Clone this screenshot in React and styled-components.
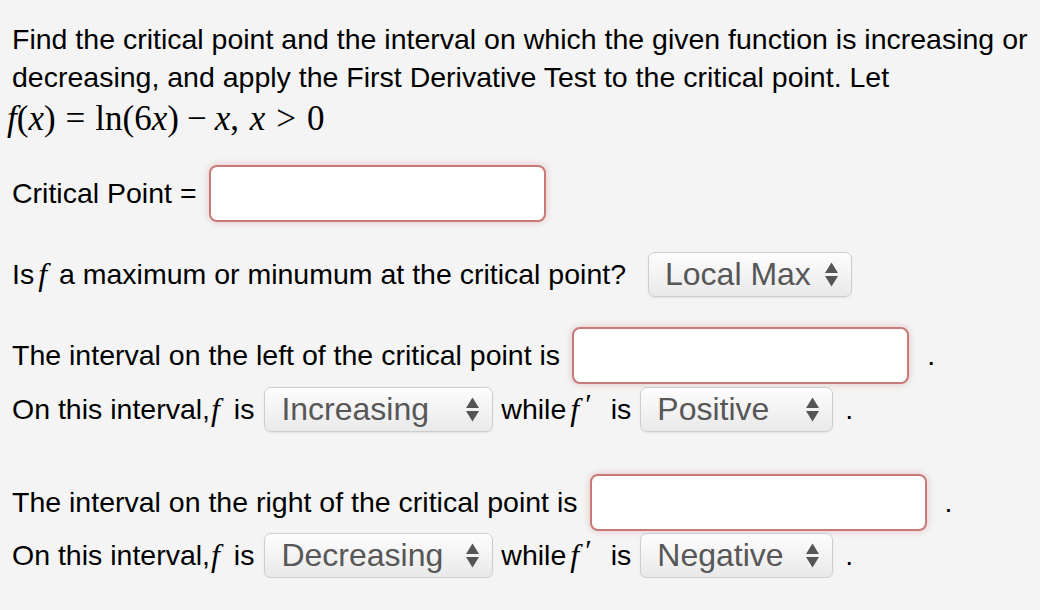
import React from "react";
import styled, { createGlobalStyle } from "styled-components";

const GlobalStyle = createGlobalStyle`
  body {
    margin: 0;
    background: #f4f4f4;
    font-family: "Liberation Sans", Helvetica, Arial, sans-serif;
    color: #000;
  }
`;

const Page = styled.div`
  padding: 20px 12px 0 12px;
  font-size: 28.5px;
`;

const Prompt = styled.p`
  margin: 0;
  line-height: 38px;
`;

const Formula = styled.div`
  display: flex;
  align-items: baseline;
  font-family: "Liberation Serif", "Times New Roman", serif;
  font-size: 35px;
  line-height: 45px;
  margin-left: -5px;
  white-space: pre;
`;

const Op = styled.span`
  margin: 0 ${(p) => p.$gap}px;
`;

const Var = styled.i`
  font-family: "Liberation Serif", "Times New Roman", serif;
  font-style: italic;
  font-size: 32px;
  margin: ${(p) => p.$m || "0 4px"};
`;

const Prime = styled.span`
  font-family: "Liberation Serif", "Times New Roman", serif;
  font-size: 30px;
  position: relative;
  top: -6px;
  margin: 0 19px 0 6px;
`;

const Row = styled.div`
  display: flex;
  align-items: center;
  white-space: pre;
  margin-top: ${(p) => p.$top}px;
  height: ${(p) => p.$h}px;
`;

const Answer = styled.div`
  box-sizing: border-box;
  width: ${(p) => p.$w}px;
  height: 57px;
  margin-left: ${(p) => p.$ml}px;
  background: #fff;
  border: 2px solid #c77b78;
  border-radius: 8px;
  box-shadow: 0 0 7px rgba(200, 110, 110, 0.4);
`;

const Dot = styled.span`
  margin-left: ${(p) => p.$ml}px;
`;

const Select = styled.div`
  box-sizing: border-box;
  width: ${(p) => p.$w}px;
  height: 45px;
  margin-left: ${(p) => p.$ml}px;
  display: flex;
  align-items: center;
  justify-content: space-between;
  padding: 0 12px 0 16px;
  border: 1.5px solid #cdcdcd;
  border-radius: 7px;
  background: linear-gradient(#fdfdfd, #f2f2f2 55%, #e9e9e9);
  box-shadow: inset 0 1px 1px #fff, 0 1px 2px rgba(0, 0, 0, 0.08);
  color: #575757;
  font-size: 32px;
`;

const Arrows = () => (
  <svg width="15" height="25" viewBox="0 0 15 25">
    <path d="M7.5 0.5 L14 11 L1 11 Z" fill="#555" />
    <path d="M7.5 24.5 L14 14 L1 14 Z" fill="#555" />
  </svg>
);

const Dropdown = ({ w, ml, children }) => (
  <Select $w={w} $ml={ml}>
    <span>{children}</span>
    <Arrows />
  </Select>
);

const DerivRow = ({ top, first, second }) => (
  <Row $top={top} $h={45}>
    On this interval,<Var $m="0 6px 0 1px">f</Var> is
    <Dropdown w={229} ml={10}>{first}</Dropdown>
    {" while"}<Var $m="0 0 0 4px">f</Var>
    <Prime>′</Prime>is
    <Dropdown w={193} ml={9}>{second}</Dropdown>
    <Dot $ml={12}>.</Dot>
  </Row>
);

export default function App() {
  return (
    <>
      <GlobalStyle />
      <Page>
        <Prompt>
          Find the critical point and the interval on which the given function is increasing or
          decreasing, and apply the First Derivative Test to the critical point. Let
        </Prompt>
        <Formula>
          <i>f</i>(<i>x</i>)<Op $gap={10}>=</Op>ln(6<i>x</i>)<Op $gap={8}>−</Op>
          <i>x</i>,<Op $gap={1}> </Op><i>x</i><Op $gap={11}>&gt;</Op>0
        </Formula>

        <Row $top={24} $h={57}>
          Critical Point =<Answer $w={337} $ml={12} />
        </Row>

        <Row $top={30} $h={45}>
          Is<Var>f</Var> a maximum or minumum at the critical point?
          <Dropdown w={204} ml={22}>Local Max</Dropdown>
        </Row>

        <Row $top={30} $h={57}>
          The interval on the left of the critical point is
          <Answer $w={337} $ml={12} />
          <Dot $ml={18}>.</Dot>
        </Row>
        <DerivRow top={3} first="Increasing" second="Positive" />

        <Row $top={42} $h={57}>
          The interval on the right of the critical point is
          <Answer $w={337} $ml={12} />
          <Dot $ml={18}>.</Dot>
        </Row>
        <DerivRow top={2} first="Decreasing" second="Negative" />
      </Page>
    </>
  );
}
